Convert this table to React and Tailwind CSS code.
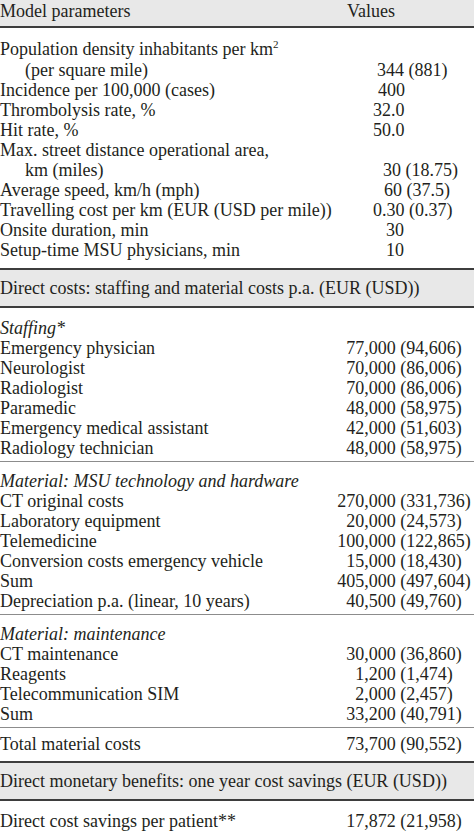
import React from 'react';

// first block: values are hand-aligned on the figure, so each gets its own offset
const modelRows = [
    { label: <>Population density inhabitants per km<span className="text-[11px] relative -top-[7px]">2</span></>, value: '' },
    { label: '(per square mile)', indent: true, value: '344 (881)', pad: 'pl-[43px]' },
    { label: 'Incidence per 100,000 (cases)', value: '400', pad: 'pl-[44px]' },
    { label: 'Thrombolysis rate, %', value: '32.0', pad: 'pl-[39px]' },
    { label: 'Hit rate, %', value: '50.0', pad: 'pl-[39px]' },
    { label: 'Max. street distance operational area,', value: '' },
    { label: 'km (miles)', indent: true, value: '30 (18.75)', pad: 'pl-[49px]' },
    { label: 'Average speed, km/h (mph)', value: '60 (37.5)', pad: 'pl-[50px]' },
    { label: 'Travelling cost per km (EUR (USD per mile))', value: '0.30 (0.37)', pad: 'pl-[39px]' },
    { label: 'Onsite duration, min', value: '30', pad: 'pl-[52px]' },
    { label: 'Setup-time MSU physicians, min', value: '10', pad: 'pl-[52px]' },
];

const staffing = [
    ['Emergency physician', '77,000 (94,606)'],
    ['Neurologist', '70,000 (86,006)'],
    ['Radiologist', '70,000 (86,006)'],
    ['Paramedic', '48,000 (58,975)'],
    ['Emergency medical assistant', '42,000 (51,603)'],
    ['Radiology technician', '48,000 (58,975)'],
];

const hardware = [
    ['CT original costs', '270,000 (331,736)'],
    ['Laboratory equipment', '20,000 (24,573)'],
    ['Telemedicine', '100,000 (122,865)'],
    ['Conversion costs emergency vehicle', '15,000 (18,430)'],
    ['Sum', '405,000 (497,604)'],
    ['Depreciation p.a. (linear, 10 years)', '40,500 (49,760)'],
];

const maintenance = [
    ['CT maintenance', '30,000 (36,860)'],
    ['Reagents', '1,200 (1,474)'],
    ['Telecommunication SIM', '2,000 (2,457)'],
    ['Sum', '33,200 (40,791)'],
];

const Row = ({ label, value }) => (
    <div className="flex h-[20px] items-center">
        <div className="w-[334px] whitespace-nowrap">{label}</div>
        <div className="flex-1 text-center whitespace-nowrap">{value}</div>
    </div>
);

const Band = ({ children }) => (
    <div className="h-[40px] flex items-center bg-[#e8e8e8] border-y-2 border-[#3d3d3d] whitespace-nowrap">
        {children}
    </div>
);

const App = () => {
    return (
        <div
            className="w-[474px] h-[833px] overflow-hidden bg-white text-[#231f20] text-[18px] leading-[20px]"
            style={{ fontFamily: '"Liberation Serif", "Times New Roman", serif' }}
        >
            {/* Header */}
            <div className="h-[28px] flex items-center bg-[#e8e8e8] border-b-2 border-[#3d3d3d] pb-[4px]">
                <div className="w-[347px] whitespace-nowrap">Model parameters</div>
                <div>Values</div>
            </div>

            {/* Model parameters */}
            <div className="pt-[12px] pb-[8px]">
                {modelRows.map((r, i) => (
                    <div key={i} className="flex h-[20px] items-center">
                        <div className={`w-[334px] whitespace-nowrap ${r.indent ? 'pl-[25px]' : ''}`}>{r.label}</div>
                        <div className={`flex-1 whitespace-nowrap ${r.pad || ''}`}>{r.value}</div>
                    </div>
                ))}
            </div>

            <Band>Direct costs: staffing and material costs p.a. (EUR (USD))</Band>

            {/* Staffing */}
            <div className="pt-[10px] pb-[3px] border-b border-[#8c8c8c]">
                <Row label={<i>Staffing*</i>} value="" />
                {staffing.map(([l, v]) => (
                    <Row key={l} label={l} value={v} />
                ))}
            </div>

            {/* Hardware */}
            <div className="pt-[9px] pb-[3px] border-b border-[#8c8c8c]">
                <Row label={<i>Material: MSU technology and hardware</i>} value="" />
                {hardware.map(([l, v]) => (
                    <Row key={l} label={l} value={v} />
                ))}
            </div>

            {/* Maintenance */}
            <div className="pt-[9px] pb-[3px] border-b border-[#8c8c8c]">
                <Row label={<i>Material: maintenance</i>} value="" />
                {maintenance.map(([l, v]) => (
                    <Row key={l} label={l} value={v} />
                ))}
            </div>

            <div className="pt-[6px] pb-[7px]">
                <Row label="Total material costs" value="73,700 (90,552)" />
            </div>

            <Band>Direct monetary benefits: one year cost savings (EUR (USD))</Band>

            <div className="pt-[10px]">
                <Row label="Direct cost savings per patient**" value="17,872 (21,958)" />
            </div>
        </div>
    );
};

export default App;
